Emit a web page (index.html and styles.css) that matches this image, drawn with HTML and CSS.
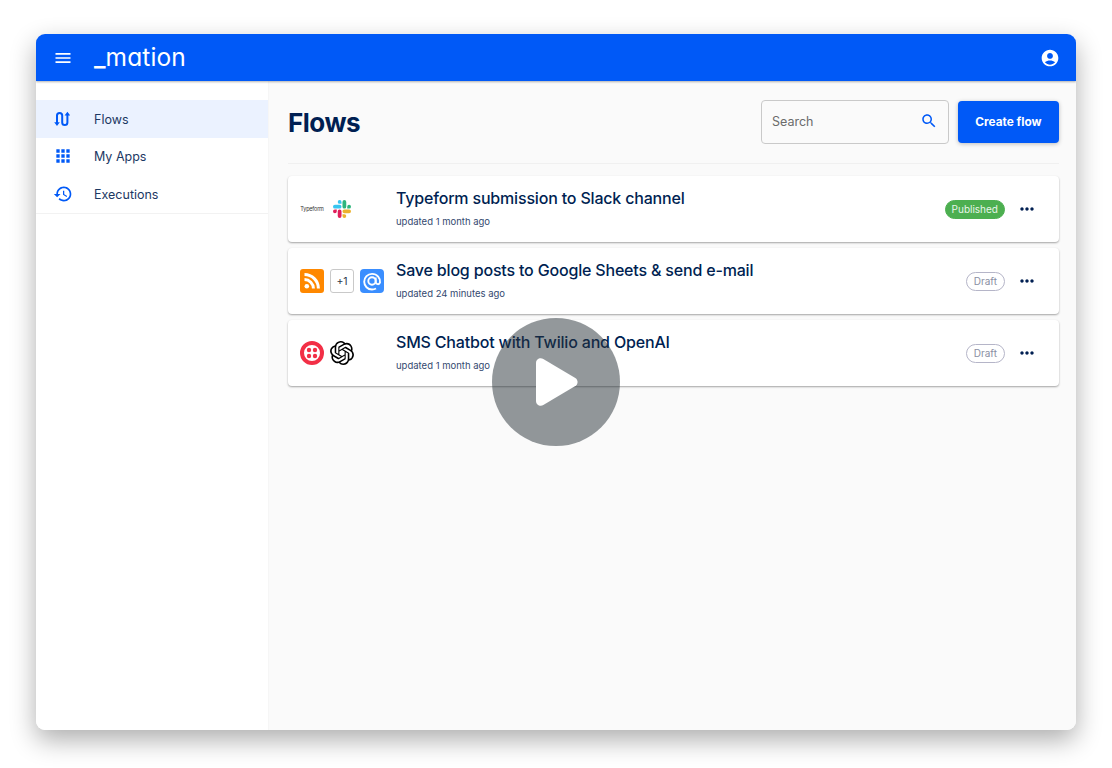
FILE: index.html
```html
<!DOCTYPE html>
<html lang="en">
<head>
    <meta charset="UTF-8" />
    <meta name="viewport" content="width=device-width, initial-scale=1.0" />
    <title>Automation flows</title>
    <link rel="stylesheet" href="styles.css">
</head>
<body>
    <div class="window">
        <div class="top-bar">
            <svg class="menu-icon" viewBox="0 0 24 24"><path d="M3 18h18v-2H3v2zm0-5h18v-2H3v2zm0-7v2h18V6H3z"/></svg>
            <div class="logo"><span class="logo-dash">_</span>mation</div>
            <svg class="account-icon" viewBox="0 0 24 24"><path d="M12 2C6.48 2 2 6.48 2 12s4.48 10 10 10 10-4.48 10-10S17.52 2 12 2zm0 4c1.93 0 3.5 1.57 3.5 3.5S13.93 13 12 13s-3.5-1.57-3.5-3.5S10.07 6 12 6zm0 14c-2.03 0-4.43-.82-6.14-2.88C7.55 15.8 9.68 15 12 15s4.45.8 6.14 2.12C16.43 19.18 14.03 20 12 20z"/></svg>
        </div>

        <div class="body-row">
            <div class="sidebar">
                <div class="nav">
                    <div class="nav-item active">
                        <svg class="nav-icon" viewBox="0 0 20 20"><path class="flow-line" d="M4 15V6.5a2.6 2.6 0 0 1 5.2 0v7a2.600 2.600 0 0 0 5.200 0V5"/><path d="M1.200 13.200h5.600L4 17zM11.600 6.600h5.600L14.400 2.800z"/></svg>
                        <span class="nav-label">Flows</span>
                    </div>
                    <div class="nav-item">
                        <svg class="nav-icon" viewBox="0 0 24 24"><path d="M4 8h4V4H4v4zm6 12h4v-4h-4v4zm-6 0h4v-4H4v4zm0-6h4v-4H4v4zm6 0h4v-4h-4v4zm6-10v4h4V4h-4zm-6 4h4V4h-4v4zm6 6h4v-4h-4v4zm0 6h4v-4h-4v4z"/></svg>
                        <span class="nav-label">My Apps</span>
                    </div>
                    <div class="nav-item">
                        <svg class="nav-icon" viewBox="0 0 24 24"><path d="M13 3c-4.97 0-9 4.03-9 9H1l3.89 3.89.07.14L9 12H6c0-3.87 3.13-7 7-7s7 3.13 7 7-3.13 7-7 7c-1.93 0-3.68-.79-4.94-2.06l-1.42 1.42C8.27 19.99 10.51 21 13 21c4.97 0 9-4.03 9-9s-4.03-9-9-9zm-1 5v5l4.28 2.54.72-1.21-3.5-2.08V8H12z"/></svg>
                        <span class="nav-label">Executions</span>
                    </div>
                </div>
            </div>

            <div class="main">
                <div class="page-header">
                    <h1 class="page-title">Flows</h1>
                    <div class="search">
                        <span class="search-label">Search</span>
                        <svg class="search-icon" viewBox="0 0 24 24"><path d="M15.5 14h-.79l-.28-.27C15.41 12.59 16 11.11 16 9.5 16 5.91 13.09 3 9.5 3S3 5.91 3 9.5 5.91 16 9.5 16c1.61 0 3.09-.59 4.23-1.57l.27.28v.79l5 4.99L20.49 19l-4.99-5zm-6 0C7.01 14 5 11.99 5 9.5S7.01 5 9.5 5 14 7.01 14 9.5 11.99 14 9.5 14z"/></svg>
                    </div>
                    <button class="create-btn">Create flow</button>
                </div>

                <div class="flow-list">
                    <div class="flow-card">
                        <div class="flow-apps">
                            <div class="app-slot"><span class="typeform">Typeform</span></div>
                            <div class="app-slot">
                                <svg class="slack" viewBox="0 0 24 24">
                                    <path fill="#e01e5a" d="M5.042 15.165a2.528 2.528 0 0 1-2.52 2.523A2.528 2.528 0 0 1 0 15.165a2.527 2.527 0 0 1 2.522-2.52h2.52v2.52zM6.313 15.165a2.527 2.527 0 0 1 2.521-2.52 2.527 2.527 0 0 1 2.521 2.52v6.313A2.528 2.528 0 0 1 8.834 24a2.528 2.528 0 0 1-2.521-2.522v-6.313z"/>
                                    <path fill="#36c5f0" d="M8.834 5.042a2.528 2.528 0 0 1-2.521-2.52A2.528 2.528 0 0 1 8.834 0a2.528 2.528 0 0 1 2.521 2.522v2.52H8.834zM8.834 6.313a2.528 2.528 0 0 1 2.521 2.521 2.528 2.528 0 0 1-2.521 2.521H2.522A2.528 2.528 0 0 1 0 8.834a2.528 2.528 0 0 1 2.522-2.521h6.312z"/>
                                    <path fill="#2eb67d" d="M18.956 8.834a2.528 2.528 0 0 1 2.522-2.521A2.528 2.528 0 0 1 24 8.834a2.528 2.528 0 0 1-2.522 2.521h-2.522V8.834zM17.688 8.834a2.528 2.528 0 0 1-2.523 2.521 2.527 2.527 0 0 1-2.52-2.521V2.522A2.527 2.527 0 0 1 15.165 0a2.528 2.528 0 0 1 2.523 2.522v6.312z"/>
                                    <path fill="#ecb22e" d="M15.165 18.956a2.528 2.528 0 0 1 2.523 2.522A2.528 2.528 0 0 1 15.165 24a2.527 2.527 0 0 1-2.52-2.522v-2.522h2.52zM15.165 17.688a2.527 2.527 0 0 1-2.52-2.523 2.526 2.526 0 0 1 2.52-2.52h6.313A2.527 2.527 0 0 1 24 15.165a2.528 2.528 0 0 1-2.522 2.523h-6.313z"/>
                                </svg>
                            </div>
                        </div>
                        <div class="flow-info">
                            <div class="flow-name">Typeform submission to Slack channel</div>
                            <div class="flow-updated">updated 1 month ago</div>
                        </div>
                        <span class="status published">Published</span>
                        <svg class="more-icon" viewBox="0 0 24 24"><path d="M6 10c-1.1 0-2 .9-2 2s.9 2 2 2 2-.9 2-2-.9-2-2-2zm12 0c-1.1 0-2 .9-2 2s.9 2 2 2 2-.9 2-2-.9-2-2-2zm-6 0c-1.1 0-2 .9-2 2s.9 2 2 2 2-.9 2-2-.9-2-2-2z"/></svg>
                    </div>

                    <div class="flow-card">
                        <div class="flow-apps">
                            <div class="app-slot">
                                <svg class="app-logo" viewBox="0 0 24 24">
                                    <rect width="24" height="24" rx="3" fill="#ff8800"/>
                                    <circle cx="6.8" cy="17.2" r="2.3" fill="#fff"/>
                                    <path class="rss-line" d="M4.5 10.6a8.9 8.9 0 0 1 8.9 8.9M4.5 5.6a13.9 13.9 0 0 1 13.9 13.9"/>
                                </svg>
                            </div>
                            <div class="app-slot app-count">+1</div>
                            <div class="app-slot">
                                <svg class="app-logo" viewBox="0 0 24 24">
                                    <rect width="24" height="24" rx="4" fill="#3a8eff"/>
                                    <circle class="mail-line" cx="12" cy="12" r="3.7"/>
                                    <path class="mail-line" d="M15.7 8.6v4.6a2.2 2.2 0 0 0 4.3.4c.6-4.6-2.8-8.7-8-8.700a7.800 7.800 0 0 0 0 15.600c1.600 0 2.800-.3 4-1"/>
                                </svg>
                            </div>
                        </div>
                        <div class="flow-info">
                            <div class="flow-name">Save blog posts to Google Sheets &amp; send e-mail</div>
                            <div class="flow-updated">updated 24 minutes ago</div>
                        </div>
                        <span class="status draft">Draft</span>
                        <svg class="more-icon" viewBox="0 0 24 24"><path d="M6 10c-1.1 0-2 .9-2 2s.9 2 2 2 2-.9 2-2-.9-2-2-2zm12 0c-1.1 0-2 .9-2 2s.9 2 2 2 2-.9 2-2-.9-2-2-2zm-6 0c-1.1 0-2 .9-2 2s.9 2 2 2 2-.9 2-2-.9-2-2-2z"/></svg>
                    </div>

                    <div class="flow-card">
                        <div class="flow-apps">
                            <div class="app-slot">
                                <svg class="app-logo" viewBox="0 0 24 24">
                                    <circle cx="12" cy="12" r="10" fill="none" stroke="#f22f46" stroke-width="4"/>
                                    <circle cx="9" cy="9" r="2.2" fill="#f22f46"/>
                                    <circle cx="15" cy="9" r="2.2" fill="#f22f46"/>
                                    <circle cx="9" cy="15" r="2.2" fill="#f22f46"/>
                                    <circle cx="15" cy="15" r="2.2" fill="#f22f46"/>
                                </svg>
                            </div>
                            <div class="app-slot">
                                <svg class="app-logo" viewBox="0 0 24 24"><path d="M22.2819 9.8211a5.9847 5.9847 0 0 0-.5157-4.9108 6.0462 6.0462 0 0 0-6.5098-2.9A6.0651 6.0651 0 0 0 4.9807 4.1818a5.9847 5.9847 0 0 0-3.9977 2.9 6.0462 6.0462 0 0 0 .7427 7.0966 5.98 5.98 0 0 0 .511 4.9107 6.051 6.051 0 0 0 6.5146 2.9001A5.9847 5.9847 0 0 0 13.2599 24a6.0557 6.0557 0 0 0 5.7718-4.2058 5.9894 5.9894 0 0 0 3.9977-2.9001 6.0557 6.0557 0 0 0-.7475-7.0729zm-9.022 12.6081a4.4755 4.4755 0 0 1-2.8764-1.0408l.1419-.0804 4.7783-2.7582a.7948.7948 0 0 0 .3927-.6813v-6.7369l2.02 1.1686a.071.071 0 0 1 .038.052v5.5826a4.504 4.504 0 0 1-4.4945 4.4944zm-9.6607-4.1254a4.4708 4.4708 0 0 1-.5346-3.0137l.142.0852 4.783 2.7582a.7712.7712 0 0 0 .7806 0l5.8428-3.3685v2.3324a.0804.0804 0 0 1-.0332.0615L9.74 19.9502a4.4992 4.4992 0 0 1-6.1408-1.6464zM2.3408 7.8956a4.485 4.485 0 0 1 2.3655-1.9728V11.6a.7664.7664 0 0 0 .3879.6765l5.8144 3.3543-2.0201 1.1685a.0757.0757 0 0 1-.071 0l-4.8303-2.7865A4.504 4.504 0 0 1 2.3408 7.872zm16.5963 3.8558L13.1038 8.364 15.1192 7.2a.0757.0757 0 0 1 .071 0l4.8303 2.7913a4.4944 4.4944 0 0 1-.6765 8.1042v-5.6772a.79.79 0 0 0-.407-.667zm2.0107-3.0231l-.142-.0852-4.7735-2.7818a.7759.7759 0 0 0-.7854 0L9.409 9.2297V6.8974a.0662.0662 0 0 1 .0284-.0615l4.8303-2.7866a4.4992 4.4992 0 0 1 6.6802 4.66zM8.3065 12.863l-2.02-1.1638a.0804.0804 0 0 1-.038-.0567V6.0742a4.4992 4.4992 0 0 1 7.3757-3.4537l-.142.0805L8.704 5.459a.7948.7948 0 0 0-.3927.6813zm1.0976-2.3654l2.602-1.4998 2.6069 1.4998v2.9994l-2.5974 1.5093-2.6067-1.4997Z"/></svg>
                            </div>
                        </div>
                        <div class="flow-info">
                            <div class="flow-name">SMS Chatbot with Twilio and OpenAI</div>
                            <div class="flow-updated">updated 1 month ago</div>
                        </div>
                        <span class="status draft">Draft</span>
                        <svg class="more-icon" viewBox="0 0 24 24"><path d="M6 10c-1.1 0-2 .9-2 2s.9 2 2 2 2-.9 2-2-.9-2-2-2zm12 0c-1.1 0-2 .9-2 2s.9 2 2 2 2-.9 2-2-.9-2-2-2zm-6 0c-1.1 0-2 .9-2 2s.9 2 2 2 2-.9 2-2-.9-2-2-2z"/></svg>
                    </div>
                </div>
            </div>
        </div>
    </div>

    <!-- video overlay sits on top of the whole shot -->
    <div class="play-btn">
        <svg viewBox="0 0 42 50"><path d="M0 5C0 1.200 4-1 7.300.9l32 19c3 1.800 3 6.400 0 8.200l-32 19C4 49 0 46.800 0 43z"/></svg>
    </div>
</body>
</html>
```

FILE: styles.css
```css
body {
    font-family: Inter, "Liberation Sans", sans-serif;
    background-color: white;
    color: #001f52;
    margin: 0;
    padding-top: 34px;
    box-sizing: border-box;
    height: 768px;
    overflow: hidden;
}

.window {
    width: 1040px;
    height: 696px;
    margin: 0 36px;
    border-radius: 9px;
    overflow: hidden;
    display: flex;
    flex-direction: column;
    box-shadow: 0 10px 26px rgba(0,0,0,0.32);
}

.top-bar {
    background-color: #0059f7;
    color: white;
    height: 47px;
    flex-shrink: 0;
    display: flex;
    align-items: center;
    padding: 0 17px;
    box-shadow: 0 1px 2px rgba(0,0,0,0.3);
    position: relative;
    z-index: 1;
}

.menu-icon {
    width: 20px;
    height: 20px;
    fill: white;
}

.logo {
    font-size: 24.5px;
    font-weight: 400;
    letter-spacing: 0.1px;
    font-feature-settings: "cv11";
    margin-left: 21px;
    line-height: 47px;
}

.logo-dash {
    font-weight: 600;
}

.account-icon {
    width: 20px;
    height: 20px;
    fill: white;
    margin-left: auto;
    margin-right: -1px;
}

.body-row {
    flex: 1;
    display: flex;
    min-height: 0;
}

.sidebar {
    width: 233px;
    flex-shrink: 0;
    background: white;
    border-right: 1px solid #f6f6f6;
    box-sizing: border-box;
    padding-top: 19px;
}

.nav {
    border-bottom: 1px solid #f2f2f2;
}

.nav-item {
    height: 37.5px;
    display: flex;
    align-items: center;
    gap: 21px;
    padding-left: 17px;
    font-size: 12.5px;
    color: #1c3863;
}

.nav-item.active {
    background-color: #ebf2ff;
}

.nav-label {
    padding-top: 1px;
}

.nav-icon {
    width: 20px;
    height: 20px;
    fill: #0059f7;
}

.flow-line {
    fill: none;
    stroke: #0059f7;
    stroke-width: 2;
}

.main {
    flex: 1;
    background-color: #fafafa;
    padding: 19px 17px 0 19px;
}

.page-header {
    display: flex;
    align-items: center;
    height: 44px;
    padding-bottom: 19px;
    border-bottom: 1px solid #f0f0f0;
    margin-bottom: 12px;
}

.page-title {
    font-size: 26px;
    font-weight: 700;
    letter-spacing: -0.5px;
    margin: 0;
    flex: 1;
}

.search {
    width: 188px;
    height: 44px;
    box-sizing: border-box;
    border: 1px solid #c9c9c9;
    border-radius: 4px;
    display: flex;
    align-items: center;
    justify-content: space-between;
    padding: 0 10px 2px;
}

.search-label {
    font-size: 12.5px;
    color: #6b6b6b;
}

.search-icon {
    width: 18px;
    height: 18px;
    fill: #0059f7;
}

.create-btn {
    width: 101px;
    height: 42px;
    margin-left: 9px;
    border: none;
    border-radius: 4px;
    background-color: #0059f7;
    color: white;
    font-family: inherit;
    font-size: 11.8px;
    font-weight: 700;
    box-shadow: 0 1px 4px rgba(0,0,0,0.25);
}

.flow-list {
    display: flex;
    flex-direction: column;
    gap: 6px;
}

.flow-card {
    height: 66px;
    background: white;
    border-radius: 4px;
    box-shadow: 0 1px 2px rgba(0,0,0,0.35);
    display: flex;
    align-items: center;
    padding: 0 22px 0 12px;
}

.flow-apps {
    width: 96px;
    display: flex;
    gap: 6px;
    flex-shrink: 0;
}

.app-slot {
    width: 24px;
    height: 24px;
    display: flex;
    align-items: center;
    justify-content: center;
}

.app-count {
    box-sizing: border-box;
    border: 1px solid #c9c9c9;
    border-radius: 3px;
    font-size: 10.5px;
    color: #2f3a4d;
}

.app-logo {
    width: 24px;
    height: 24px;
}

.typeform {
    font-size: 5.5px;
    color: #333;
    letter-spacing: -0.2px;
}

.slack {
    width: 18px;
    height: 18px;
}

.rss-line {
    fill: none;
    stroke: white;
    stroke-width: 3;
}

.mail-line {
    fill: none;
    stroke: white;
    stroke-width: 1.9;
}

.flow-info {
    flex: 1;
    margin-top: -1px;
}

.flow-name {
    font-size: 16px;
    font-weight: 500;
    letter-spacing: -0.18px;
    line-height: 20px;
    margin-bottom: 7px;
}

.flow-updated {
    font-size: 9.5px;
    line-height: 14px;
    color: #33496f;
}

.status {
    font-size: 10px;
    line-height: 17px;
    border-radius: 10px;
    padding: 0 6px;
    margin-right: 12px;
}

.status.published {
    background-color: #4caf50;
    color: #e8f5e9;
    border: 1px solid #4caf50;
}

.status.draft {
    color: #8a8fa3;
    border: 1px solid #b5b5c8;
    padding: 0 7px;
}

.more-icon {
    width: 20px;
    height: 20px;
    fill: #001f52;
    flex-shrink: 0;
}

.play-btn {
    position: absolute;
    left: 492px;
    top: 318px;
    width: 128px;
    height: 128px;
    border-radius: 50%;
    background-color: rgba(40,50,56,0.5);
    display: flex;
    align-items: center;
    justify-content: center;
}

.play-btn svg {
    width: 42px;
    height: 50px;
    fill: white;
    margin: 2px 0 0 2px;
}
```
